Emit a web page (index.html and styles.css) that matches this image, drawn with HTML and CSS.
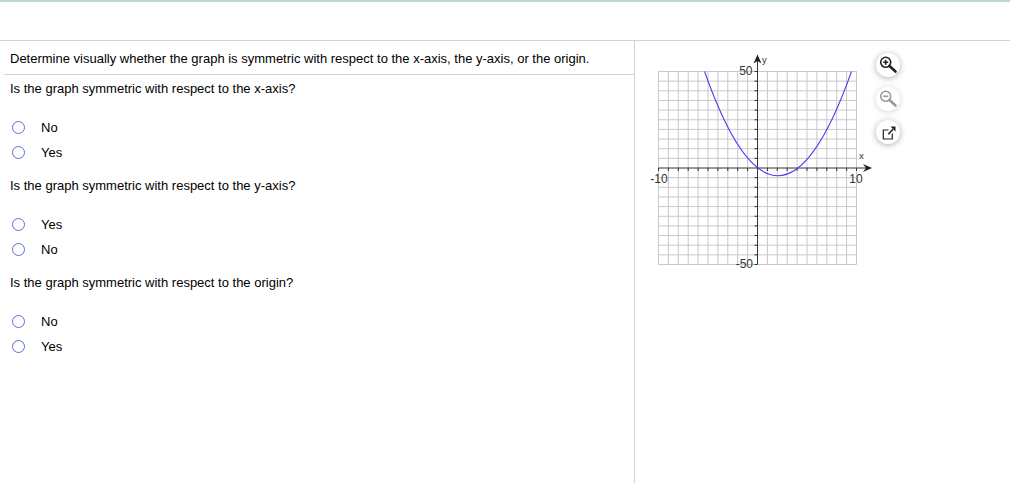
FILE: index.html
```html
<!DOCTYPE html>
<html lang="en">
<head>
<meta charset="utf-8">
<title>Graph symmetry</title>
<link rel="stylesheet" href="styles.css">
</head>
<body>
<div class="topbar"></div>
<main class="main">
  <section class="left">
    <h1 class="prompt">Determine visually whether the graph is symmetric with respect to the x-axis, the y-axis, or the origin.</h1>
    <div class="body">
      <div class="question">
        <p class="qtext">Is the graph symmetric with respect to the x-axis?</p>
        <div class="opts">
          <label class="opt"><span class="radio"></span><span>No</span></label>
          <label class="opt"><span class="radio"></span><span>Yes</span></label>
        </div>
      </div>
      <div class="question">
        <p class="qtext">Is the graph symmetric with respect to the y-axis?</p>
        <div class="opts">
          <label class="opt"><span class="radio"></span><span>Yes</span></label>
          <label class="opt"><span class="radio"></span><span>No</span></label>
        </div>
      </div>
      <div class="question">
        <p class="qtext">Is the graph symmetric with respect to the origin?</p>
        <div class="opts">
          <label class="opt"><span class="radio"></span><span>No</span></label>
          <label class="opt"><span class="radio"></span><span>Yes</span></label>
        </div>
      </div>
    </div>
  </section>
  <aside class="right">
    <svg class="graph" width="240" height="240" viewBox="0 0 240 240" xmlns="http://www.w3.org/2000/svg">
      <path class="grid" d="M23.500 26V219.500M33.400 26V219.500M43.300 26V219.500M53.200 26V219.500M63.100 26V219.500M73 26V219.500M82.900 26V219.500M92.800 26V219.500M102.700 26V219.500M112.600 26V219.500M122.500 26V219.500M132.400 26V219.500M142.300 26V219.500M152.200 26V219.500M162.100 26V219.500M172 26V219.500M181.900 26V219.500M191.800 26V219.500M201.700 26V219.500M211.600 26V219.500M221.500 26V219.500M23.500 26.500H221.500M23.500 36.150H221.500M23.500 45.800H221.500M23.500 55.450H221.500M23.500 65.100H221.500M23.500 74.750H221.500M23.500 84.400H221.500M23.500 94.050H221.500M23.500 103.700H221.500M23.500 113.350H221.500M23.500 132.650H221.500M23.500 142.300H221.500M23.500 151.950H221.500M23.500 161.600H221.500M23.500 171.250H221.500M23.500 180.900H221.500M23.500 190.550H221.500M23.500 200.200H221.500M23.500 209.850H221.500M23.500 219.500H221.500"/>
      <path class="axis" d="M122.500 14V219.500M23.500 123H232"/>
      <path class="axis" d="M23.500 123v3M33.400 123v3M43.300 123v3M53.200 123v3M63.100 123v3M73 123v3M82.900 123v3M92.800 123v3M102.700 123v3M112.600 123v3M132.400 123v3M142.300 123v3M152.200 123v3M162.100 123v3M172 123v3M181.900 123v3M191.800 123v3M201.700 123v3M211.600 123v3M221.500 123v3M119.500 26.500h3M119.500 36.150h3M119.500 45.800h3M119.500 55.450h3M119.500 65.100h3M119.500 74.750h3M119.500 84.400h3M119.500 94.050h3M119.500 103.700h3M119.500 113.350h3M119.500 132.650h3M119.500 142.300h3M119.500 151.950h3M119.500 161.600h3M119.500 171.250h3M119.500 180.900h3M119.500 190.550h3M119.500 200.200h3M119.500 209.850h3M119.500 219.500h3"/>
      <path class="head" d="M122.500 9.500L126.500 18.500L122.500 16L118.500 18.500ZM237 123L228 119L231 123L228 127Z"/>
      <path class="curve" d="M69.600 26.500Q142.800 234.900 216.500 26.500"/>
      <text class="label" x="117.500" y="29.500" text-anchor="end">50</text>
      <text class="label" x="118" y="223" text-anchor="end">-50</text>
      <text class="label" x="24" y="138" text-anchor="middle">-10</text>
      <text class="label" x="221" y="138" text-anchor="middle">10</text>
      <text class="small" x="127" y="18">y</text>
      <text class="small" x="224" y="114">x</text>
    </svg>
    <div class="tools">
      <button class="tool" type="button" aria-label="Zoom in">
        <svg width="20" height="20" viewBox="0 0 20 20"><circle cx="7.700" cy="7.300" r="5" class="ic"/><path class="ic" d="M5.200 7.300h5M7.700 4.800v5"/><path class="ich" d="M11.500 11l6 5.500"/></svg>
      </button>
      <button class="tool dim" type="button" aria-label="Zoom out">
        <svg width="20" height="20" viewBox="0 0 20 20"><circle cx="7.700" cy="7.300" r="5" class="ic"/><path class="ic" d="M5.200 7.300h5"/><path class="ich" d="M11.500 11l6 5.500"/></svg>
      </button>
      <button class="tool" type="button" aria-label="Open in new window">
        <svg width="20" height="20" viewBox="0 0 20 20"><path class="ic1" d="M10.500 8H5.300V17H14.300V11.500"/><path class="ic" d="M10.300 12.300L15 7.300"/><path class="fill" d="M12.500 4.500H17.500V9.500Z"/></svg>
      </button>
    </div>
  </aside>
</main>
</body>
</html>
```
FILE: styles.css
```css
* { box-sizing: border-box; }
html, body { margin: 0; padding: 0; height: 100%; }
body {
  background: #fff;
  color: #000;
  font-family: "Liberation Sans", Arial, sans-serif;
  font-size: 13px;
  overflow: hidden;
}
.topbar { height: 2px; background: #bcd9d5; margin-bottom: 38px; }
.main {
  display: flex;
  height: 443px;
  border-top: 1px solid #cdd3e0;
}
.left {
  width: 635px;
  flex: none;
  border-right: 1px solid #cdd3e0;
}
.prompt {
  margin: 0 0 0 4px;
  padding: 0 0 0 6px;
  height: 34px;
  line-height: 35px;
  font-size: 13px;
  font-weight: normal;
  border-bottom: 1px solid #cdd3e0;
}
.body { padding: 0 0 0 10px; }
.question { padding-bottom: 10px; }
.qtext { margin: 0; height: 27px; line-height: 28px; }
.opts { display: flex; flex-direction: column; gap: 5px; padding-top: 15px; }
.opt { display: flex; align-items: center; height: 20px; }
.radio {
  width: 13px;
  height: 13px;
  margin: 0 16px 0 2px;
  border: 1.300px solid #5b6fd0;
  border-radius: 50%;
  background: #fff;
}
.right { flex: 1; display: flex; align-items: flex-start; }
.graph { flex: none; margin: 4px 0 0 0; }
.grid { fill: none; stroke: #c8c8c8; stroke-width: 1; }
.axis { fill: none; stroke: #333; stroke-width: 1; }
.head { fill: #222; }
.curve { fill: none; stroke: #4a3cf0; stroke-width: 1.050; }
.label { font-family: "Liberation Sans", Arial, sans-serif; font-size: 12px; fill: #333; }
.small { font-family: "Liberation Sans", Arial, sans-serif; font-size: 9.500px; fill: #333; }
.tools {
  display: flex;
  flex-direction: column;
  gap: 9.500px;
  margin: 12px 0 0 1px;
}
.tool {
  width: 24px;
  height: 24px;
  padding: 0;
  border: 0;
  border-radius: 50%;
  background: #fff;
  box-shadow: 0 1px 6px rgba(0,0,0,.32);
  display: flex;
  align-items: center;
  justify-content: center;
}
.ic { fill: none; stroke: #222; stroke-width: 1.600; }
.ic1 { fill: none; stroke: #222; stroke-width: 1.200; }
.ich { fill: none; stroke: #222; stroke-width: 2.600; stroke-linecap: round; }
.fill { fill: #222; }
.dim { box-shadow: 0 1px 6px rgba(0,0,0,.18); }
.dim .ic, .dim .ich { stroke: #9a9a9a; }
```
